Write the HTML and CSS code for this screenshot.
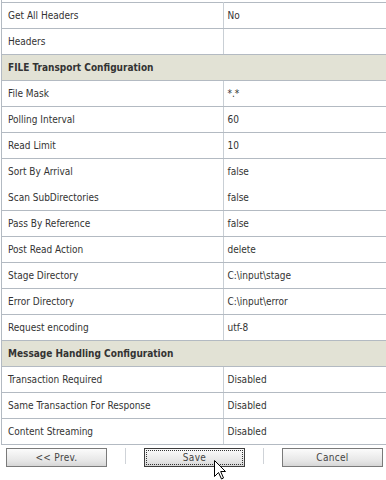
FILE: index.html
```html
<!DOCTYPE html>
<html lang="en">
    <head>
        <meta charset="UTF-8" />
        <meta name="viewport" content="width=device-width, initial-scale=1.0" />
        <title>FILE Transport Configuration</title>
        <link rel="stylesheet" href="styles.css">
    </head>
    <body>
        <div class="page">
            <table class="config">
                <tr><td class="label">Get All Headers</td><td class="value">No</td></tr>
                <tr><td class="label">Headers</td><td class="value"></td></tr>
                <tr class="section"><td colspan="2">FILE Transport Configuration</td></tr>
                <tr><td class="label">File Mask</td><td class="value">*.*</td></tr>
                <tr><td class="label">Polling Interval</td><td class="value">60</td></tr>
                <tr><td class="label">Read Limit</td><td class="value">10</td></tr>
                <tr class="no-line"><td class="label">Sort By Arrival</td><td class="value">false</td></tr>
                <tr><td class="label">Scan SubDirectories</td><td class="value">false</td></tr>
                <tr><td class="label">Pass By Reference</td><td class="value">false</td></tr>
                <tr><td class="label">Post Read Action</td><td class="value">delete</td></tr>
                <tr><td class="label">Stage Directory</td><td class="value">C:\input\stage</td></tr>
                <tr><td class="label">Error Directory</td><td class="value">C:\input\error</td></tr>
                <tr><td class="label">Request encoding</td><td class="value">utf-8</td></tr>
                <tr class="section"><td colspan="2">Message Handling Configuration</td></tr>
                <tr><td class="label">Transaction Required</td><td class="value">Disabled</td></tr>
                <tr><td class="label">Same Transaction For Response</td><td class="value">Disabled</td></tr>
                <tr><td class="label">Content Streaming</td><td class="value">Disabled</td></tr>
            </table>
        </div>

        <div class="buttons">
            <button class="btn">&lt;&lt; Prev.</button>
            <span class="sep"></span>
            <button class="btn focused"><span>Save</span></button>
            <span class="sep"></span>
            <button class="btn">Cancel</button>
        </div>

        <svg class="cursor" width="13" height="20" viewBox="0 0 13 20">
            <path d="M0.5 0.5 L0.5 16.5 L4.5 12.5 L7.5 19 L9.5 18 L6.7 11.5 L11.5 11.5 Z"
                  fill="#ffffff" stroke="#000000" stroke-width="1" stroke-linejoin="miter" />
        </svg>
    </body>
</html>
```

FILE: styles.css
```css
* {
    margin: 0;
    padding: 0;
    box-sizing: border-box;
}

body {
    background-color: #ffffff;
    font-family: "DejaVu Sans Condensed", "DejaVu Sans", sans-serif;
    font-stretch: condensed;
    font-size: 10px;
    color: #333333;
    width: 386px;
    height: 480px;
    overflow: hidden;
    position: relative;
}

.page {
    margin-left: 1px;
    padding-top: 2px;
    border-left: 1px solid #b3bac2;
}

.config {
    width: 100%;
    table-layout: fixed;
    border-collapse: collapse;
    border-top: 1px solid #b3bac2;
}

.config td {
    height: 26px;
    padding: 0;
    border-bottom: 1px solid #b3bac2;
    vertical-align: middle;
    white-space: nowrap;
    overflow: hidden;
}

.config .label {
    width: 221px;
    padding-left: 6px;
    border-right: 1px solid #c9cfd5;
}

.config .value {
    padding-left: 4px;
}

.config .no-line td {
    border-bottom: 0;
}

.config .section td {
    background-color: #e2e2d5;
    font-weight: bold;
    padding-left: 6px;
}

.buttons {
    display: flex;
    align-items: flex-start;
    gap: 18px;
    padding: 3px 0 0 6px;
}

.btn {
    width: 101px;
    height: 19px;
    border: 1px solid #7a7a7a;
    background: linear-gradient(#fbfbfb, #e6e6e6 70%, #d6d6d6);
    font-family: "DejaVu Sans Condensed", "DejaVu Sans", sans-serif;
    font-stretch: condensed;
    font-size: 10px;
    letter-spacing: 0.3px;
    color: #444444;
    line-height: 1;
}

.btn.focused {
    border-color: #3c3c3c;
    padding: 1px;
}

.btn.focused span {
    display: flex;
    justify-content: center;
    align-items: center;
    height: 100%;
    border: 1px dotted #333333;
}

.sep {
    width: 1px;
    height: 16px;
    background-color: #cfd3d8;
}

.cursor {
    position: absolute;
    left: 214px;
    top: 460px;
}
```
